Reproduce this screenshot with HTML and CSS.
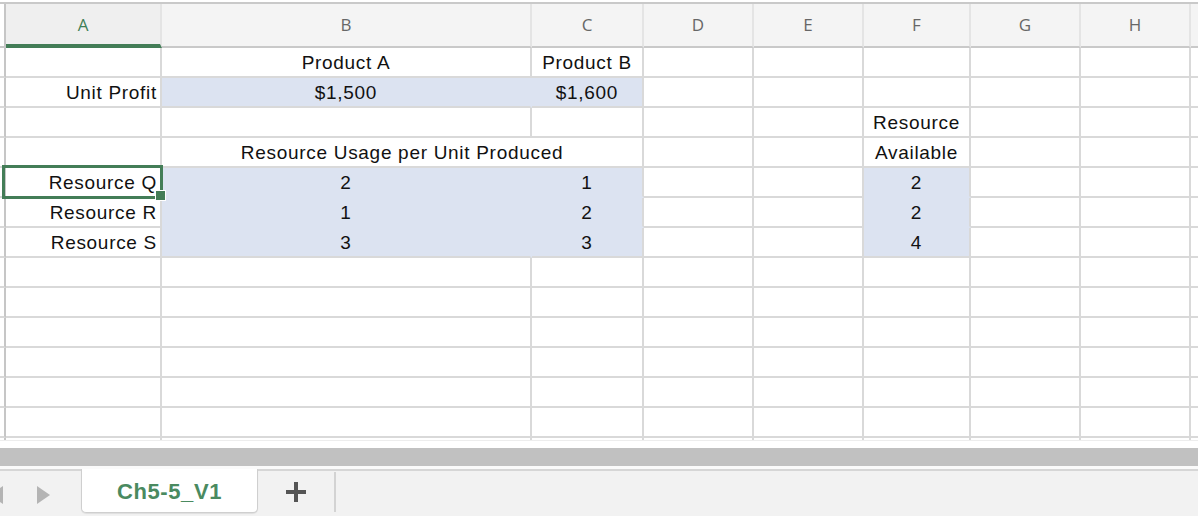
FILE: index.html
```html
<!DOCTYPE html>
<html>
<head>
<meta charset="utf-8">
<link rel="stylesheet" href="styles.css">
</head>
<body>
<div class="app">
  <div class="topline"></div>
  <div class="colheads">
    <div class="ch corner"></div>
    <div class="ch active">A</div>
    <div class="ch">B</div>
    <div class="ch">C</div>
    <div class="ch">D</div>
    <div class="ch">E</div>
    <div class="ch">F</div>
    <div class="ch">G</div>
    <div class="ch">H</div>
    <div class="ch last"></div>
  </div>
  <div class="sheet">
    <!-- row 1 -->
    <div class="rh"></div><div class="c"></div><div class="c ctr">Product A</div><div class="c ctr">Product B</div><div class="c"></div><div class="c"></div><div class="c"></div><div class="c"></div><div class="c"></div><div class="c"></div>
    <!-- row 2 -->
    <div class="rh"></div><div class="c rt">Unit Profit</div><div class="c ctr fill fill-in">$1,500</div><div class="c ctr fill">$1,600</div><div class="c"></div><div class="c"></div><div class="c"></div><div class="c"></div><div class="c"></div><div class="c"></div>
    <!-- row 3 -->
    <div class="rh"></div><div class="c"></div><div class="c"></div><div class="c"></div><div class="c"></div><div class="c"></div><div class="c ctr">Resource</div><div class="c"></div><div class="c"></div><div class="c"></div>
    <!-- row 4 -->
    <div class="rh"></div><div class="c"></div><div class="c ctr span2">Resource Usage per Unit Produced</div><div class="c"></div><div class="c"></div><div class="c ctr">Available</div><div class="c"></div><div class="c"></div><div class="c"></div>
    <!-- row 5 -->
    <div class="rh"></div><div class="c rt sel">Resource Q<span class="selbox"></span><span class="handle"></span></div><div class="c ctr fill fill-in fill-down">2</div><div class="c ctr fill fill-down">1</div><div class="c"></div><div class="c"></div><div class="c ctr fill fill-down">2</div><div class="c"></div><div class="c"></div><div class="c"></div>
    <!-- row 6 -->
    <div class="rh"></div><div class="c rt">Resource R</div><div class="c ctr fill fill-in fill-down">1</div><div class="c ctr fill fill-down">2</div><div class="c"></div><div class="c"></div><div class="c ctr fill fill-down">2</div><div class="c"></div><div class="c"></div><div class="c"></div>
    <!-- row 7 -->
    <div class="rh"></div><div class="c rt">Resource S</div><div class="c ctr fill fill-in">3</div><div class="c ctr fill">3</div><div class="c"></div><div class="c"></div><div class="c ctr fill">4</div><div class="c"></div><div class="c"></div><div class="c"></div>
    <!-- rows 8-13 -->
    <div class="rh"></div><div class="c"></div><div class="c"></div><div class="c"></div><div class="c"></div><div class="c"></div><div class="c"></div><div class="c"></div><div class="c"></div><div class="c"></div>
    <div class="rh"></div><div class="c"></div><div class="c"></div><div class="c"></div><div class="c"></div><div class="c"></div><div class="c"></div><div class="c"></div><div class="c"></div><div class="c"></div>
    <div class="rh"></div><div class="c"></div><div class="c"></div><div class="c"></div><div class="c"></div><div class="c"></div><div class="c"></div><div class="c"></div><div class="c"></div><div class="c"></div>
    <div class="rh"></div><div class="c"></div><div class="c"></div><div class="c"></div><div class="c"></div><div class="c"></div><div class="c"></div><div class="c"></div><div class="c"></div><div class="c"></div>
    <div class="rh"></div><div class="c"></div><div class="c"></div><div class="c"></div><div class="c"></div><div class="c"></div><div class="c"></div><div class="c"></div><div class="c"></div><div class="c"></div>
    <div class="rh"></div><div class="c"></div><div class="c"></div><div class="c"></div><div class="c"></div><div class="c"></div><div class="c"></div><div class="c"></div><div class="c"></div><div class="c"></div>
    <!-- partial row 14 -->
    <div class="rh p"></div><div class="c p"></div><div class="c p"></div><div class="c p"></div><div class="c p"></div><div class="c p"></div><div class="c p"></div><div class="c p"></div><div class="c p"></div><div class="c p"></div>
  </div>
  <div class="gap"></div>
  <div class="hscroll"></div>
  <div class="gap2"></div>
  <div class="tabbar">
    <div class="nav">
      <svg width="81" height="44" viewBox="0 0 81 44">
        <polygon points="-11,24 3,15 3,33" fill="#b4b4b4"/>
        <polygon points="37,15 37,33 50,24" fill="#b4b4b4"/>
      </svg>
    </div>
    <div class="tab">Ch5-5_V1</div>
    <div class="add">
      <svg width="22" height="22" viewBox="0 0 22 22">
        <rect x="9" y="1" width="4" height="20" fill="#555"/>
        <rect x="1" y="9" width="20" height="4" fill="#555"/>
      </svg>
    </div>
    <div class="divider"></div>
  </div>
</div>
</body>
</html>
```

FILE: styles.css
```css
* { box-sizing: border-box; }
html, body { margin: 0; padding: 0; background: #fff; }
.app {
  width: 1198px;
  height: 516px;
  overflow: hidden;
  display: flex;
  flex-direction: column;
  font-family: "Liberation Sans", Arial, sans-serif;
}
.topline {
  height: 4px;
  border-top: 2px solid #fff;
  background: #c9c9c9;
  flex: none;
}
.colheads, .sheet {
  display: grid;
  grid-template-columns: 6px 156px 370px 112px 110px 110px 107px 110px 110px 8px;
  flex: none;
}
.colheads { height: 44px; }
.ch {
  background: #f4f4f4;
  border-right: 2px solid #e4e4e4;
  border-bottom: 2px solid #c9c9c9;
  display: flex;
  align-items: center;
  justify-content: center;
  font-family: "Open Sans", sans-serif;
  font-size: 17px;
  color: #676767;
  padding-bottom: 2px;
}
.ch.corner { background: #fff; border-right-color: #c6c6c6; }
.ch.active {
  color: #3f7f56;
  background: #efefef;
  border-bottom: 4px solid #437d57;
  padding-top: 2px;
}
.ch.last { border-right: none; }
.sheet { height: 392px; grid-template-rows: repeat(13, 30px) 2px; }
.rh {
  border-right: 2px solid #c6c6c6;
  border-bottom: 2px solid #d9d9d9;
}
.c {
  border-right: 2px solid #d9d9d9;
  border-bottom: 2px solid #d9d9d9;
  display: flex;
  align-items: center;
  padding: 2px 4px 0 4px;
  font-size: 19px;
  letter-spacing: 0.7px;
  color: #111;
  white-space: nowrap;
  position: relative;
}
.c.p, .rh.p { border-bottom: none; }
.ctr { justify-content: center; }
.rt { justify-content: flex-end; padding-right: 3px; }
.span2 { grid-column: span 2; }
.fill { background: #dce3f1; }
.fill-in { border-right-color: #dce3f1; }
.fill-down { border-bottom-color: #dce3f1; }
.sel { z-index: 2; }
.selbox {
  position: absolute;
  left: -4px;
  top: -3px;
  width: 161px;
  height: 34px;
  border: 3px solid #437d57;
  pointer-events: none;
}
.handle {
  position: absolute;
  left: 149px;
  top: 22px;
  width: 11px;
  height: 11px;
  background: #437d57;
  border: 1px solid #fff;
}
.gap {
  height: 8px;
  flex: none;
  border-top: 1px solid #ededed;
  background: #fff;
}
.hscroll { height: 18px; background: #c1c1c1; flex: none; }
.gap2 { height: 3px; background: #fafafa; flex: none; }
.tabbar {
  flex: 1;
  background: #f2f2f2;
  border-top: 2px solid #d6d6d6;
  display: flex;
  align-items: flex-start;
}
.nav { width: 81px; height: 44px; flex: none; }
.nav svg { display: block; }
.tab {
  width: 177px;
  height: 44px;
  margin-top: -2px;
  background: #fff;
  border: 1px solid #cfcfcf;
  border-top: none;
  border-radius: 0 0 5px 5px;
  box-shadow: 0 1px 1px rgba(0,0,0,0.08);
  display: flex;
  align-items: center;
  justify-content: center;
  font-weight: bold;
  font-size: 22px;
  letter-spacing: 0.6px;
  color: #4a8a60;
  padding-top: 2px;
  flex: none;
}
.add {
  width: 76px;
  height: 42px;
  display: flex;
  align-items: center;
  justify-content: center;
  flex: none;
}
.add svg { display: block; }
.divider {
  width: 2px;
  height: 40px;
  margin-top: 1px;
  background: #d3d3d3;
  flex: none;
}
```
